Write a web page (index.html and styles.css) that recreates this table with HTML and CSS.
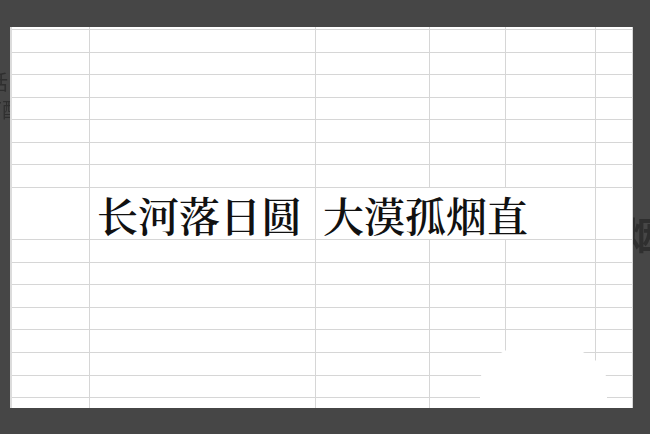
FILE: index.html
```html
<!DOCTYPE html>
<html lang="zh">
<head>
<meta charset="utf-8">
<link rel="stylesheet" href="styles.css">
</head>
<body>
<div class="stage">
  <div class="bg-text bg-left1">话</div>
  <div class="bg-text bg-left2">下配</div>
  <div class="bg-text bg-right">烟</div>
  <div class="sheet">
    <div class="grid" id="grid"></div>
    <div class="erase"></div>
  </div>
</div>
<script>
(function(){
  var g = document.getElementById('grid');
  var rows = 17;
  for (var r = 0; r < rows; r++) {
    if (r === 8) {
      var a = document.createElement('div'); a.className = 'cell'; g.appendChild(a);
      var b = document.createElement('div'); b.className = 'cell txt'; b.textContent = '长河落日圆'; g.appendChild(b);
      var c = document.createElement('div'); c.className = 'cell txt span3'; c.textContent = '大漠孤烟直'; g.appendChild(c);
      var f = document.createElement('div'); f.className = 'cell'; g.appendChild(f);
    } else {
      for (var k = 0; k < 6; k++) {
        var d = document.createElement('div'); d.className = 'cell'; g.appendChild(d);
      }
    }
  }
})();
</script>
</body>
</html>
```

FILE: styles.css
```css
html, body {
  margin: 0;
  padding: 0;
}
body {
  background: #464646;
  width: 650px;
  height: 434px;
  overflow: hidden;
}
.stage {
  position: relative;
  width: 650px;
  height: 434px;
  padding: 27px 0 0 10px;
  box-sizing: border-box;
}
.bg-text {
  position: absolute;
  color: #2f2f2f;
  font-family: "Noto Sans CJK SC", sans-serif;
  filter: blur(0.6px);
  line-height: 1;
}
.bg-left1 {
  left: -12px;
  top: 72px;
  font-size: 20px;
}
.bg-left2 {
  left: -18px;
  top: 100px;
  font-size: 20px;
}
.bg-right {
  left: 624px;
  top: 214px;
  font-size: 38px;
  font-weight: 700;
}
.sheet {
  position: relative;
  z-index: 1;
  width: 623px;
  height: 381px;
  background: #fff;
  overflow: hidden;
  border-left: 2px solid #dcdcdc;
  box-sizing: border-box;
}
.grid {
  display: grid;
  grid-template-columns: 78px 226px 114px 76px 90px 37px;
  grid-template-rows: 3px repeat(7, 22.5px) 52.5px repeat(7, 22.6px) 20px;
}
.cell {
  box-sizing: border-box;
  border-right: 1px solid #d6d6d6;
  border-bottom: 1px solid #d6d6d6;
  min-width: 0;
}
.span3 {
  grid-column: span 3;
}
.txt {
  display: flex;
  align-items: center;
  padding-left: 7px;
  padding-top: 2px;
  font-family: "Noto Serif CJK SC", "Noto Sans CJK SC", serif;
  font-size: 41px;
  font-weight: 600;
  color: #111;
  white-space: nowrap;
}
.erase {
  position: absolute;
  left: 468px;
  top: 316px;
  width: 127px;
  height: 100px;
  background: #fff;
  border-radius: 48% 52% 10% 10% / 40% 40% 10% 10%;
}
```
